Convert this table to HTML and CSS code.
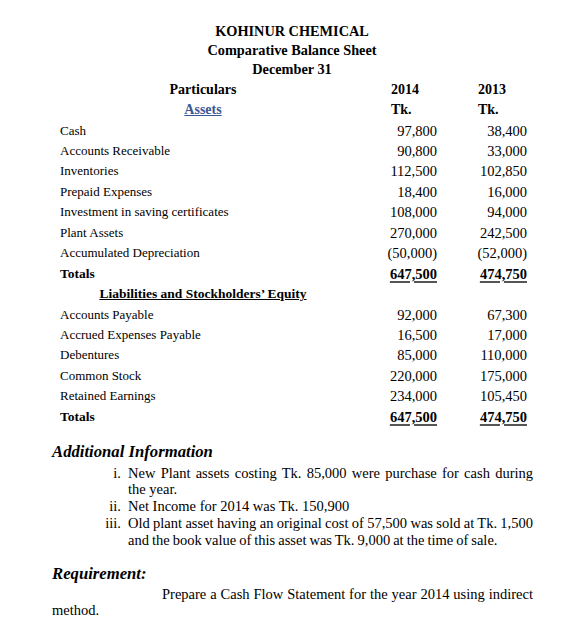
FILE: index.html
```html
<!DOCTYPE html>
<html lang="en">
<head>
    <meta charset="UTF-8">
    <meta name="viewport" content="width=device-width, initial-scale=1.0">
    <title>Kohinur Chemical - Comparative Balance Sheet</title>
    <link rel="stylesheet" href="styles.css">
</head>
<body>
    <div class="page">
        <header class="title">
            <div>KOHINUR CHEMICAL</div>
            <div>Comparative Balance Sheet</div>
            <div>December 31</div>
        </header>

        <div class="sheet">
            <div class="row head">
                <div class="label center">Particulars</div>
                <div class="y14">2014</div>
                <div class="y13">2013</div>
            </div>
            <div class="row head">
                <div class="label center"><span class="section">Assets</span></div>
                <div class="y14">Tk.</div>
                <div class="y13">Tk.</div>
            </div>

            <div class="row"><div class="label">Cash</div><div class="num">97,800</div><div class="num">38,400</div></div>
            <div class="row"><div class="label">Accounts Receivable</div><div class="num">90,800</div><div class="num">33,000</div></div>
            <div class="row"><div class="label">Inventories</div><div class="num">112,500</div><div class="num">102,850</div></div>
            <div class="row"><div class="label">Prepaid Expenses</div><div class="num">18,400</div><div class="num">16,000</div></div>
            <div class="row"><div class="label">Investment in saving certificates</div><div class="num">108,000</div><div class="num">94,000</div></div>
            <div class="row"><div class="label">Plant Assets</div><div class="num">270,000</div><div class="num">242,500</div></div>
            <div class="row"><div class="label">Accumulated Depreciation</div><div class="num">(50,000)</div><div class="num">(52,000)</div></div>
            <div class="row total"><div class="label">Totals</div><div class="num"><u>647,500</u></div><div class="num"><u>474,750</u></div></div>

            <div class="row head">
                <div class="label center"><span class="sub">Liabilities and Stockholders’ Equity</span></div>
                <div></div>
                <div></div>
            </div>
            <div class="row"><div class="label">Accounts Payable</div><div class="num">92,000</div><div class="num">67,300</div></div>
            <div class="row"><div class="label">Accrued Expenses Payable</div><div class="num">16,500</div><div class="num">17,000</div></div>
            <div class="row"><div class="label">Debentures</div><div class="num">85,000</div><div class="num">110,000</div></div>
            <div class="row"><div class="label">Common Stock</div><div class="num">220,000</div><div class="num">175,000</div></div>
            <div class="row"><div class="label">Retained Earnings</div><div class="num">234,000</div><div class="num">105,450</div></div>
            <div class="row total"><div class="label">Totals</div><div class="num"><u>647,500</u></div><div class="num"><u>474,750</u></div></div>
        </div>

        <h3 class="heading info">Additional Information</h3>
        <ul class="notes">
            <li><span class="mark">i.</span><span class="text">New Plant assets costing Tk. 85,000 were purchase for cash during the year.</span></li>
            <li><span class="mark">ii.</span><span class="text">Net Income for 2014 was Tk. 150,900</span></li>
            <li class="tight"><span class="mark">iii.</span><span class="text">Old plant asset having an original cost of 57,500 was sold at Tk. 1,500 and the book value of this asset was Tk. 9,000 at the time of sale.</span></li>
        </ul>

        <h3 class="heading req">Requirement:</h3>
        <p class="task">Prepare a Cash Flow Statement for the year 2014 using indirect method.</p>
    </div>
</body>
</html>
```

FILE: styles.css
```css
body {
    margin: 0;
    padding: 0;
    background-color: #ffffff;
    color: #000000;
    font-family: 'Liberation Serif', 'Times New Roman', serif;
    font-size: 13px;
}

.page {
    width: 481px;
    padding: 21.5px 0 0 52px;
}

.title {
    font-size: 14.3px;
    font-weight: bold;
    line-height: 19.4px;
    text-align: center;
    width: 480px;
}

.sheet {
    margin-left: 8px;
    width: 467px;
}

.row {
    display: grid;
    grid-template-columns: 286px 91px 90px;
    height: 20.44px;
    align-items: center;
    line-height: 20.44px;
}

.head {
    font-weight: bold;
    font-size: 14px;
}

.label.center {
    text-align: center;
}

.y14 {
    padding-left: 45px;
}

.y13 {
    padding-left: 41px;
}

.section {
    color: #3b5896;
    text-decoration: underline;
}

.sub {
    font-size: 13.5px;
    text-decoration: underline;
}

.num {
    font-size: 14.5px;
    text-align: right;
}

.total {
    font-weight: bold;
}

.total .label {
    font-size: 13.5px;
}

.total u {
    text-decoration-color: #555;
    text-decoration-thickness: 1.5px;
    text-underline-offset: 2px;
}

.heading {
    margin: 0;
    font-size: 16.7px;
    font-style: italic;
    font-weight: bold;
    line-height: 20px;
}

.info {
    margin-top: 15px;
}

.notes {
    list-style: none;
    margin: 2.5px 0 0;
    padding: 0;
    font-size: 14.5px;
}

.notes li {
    display: grid;
    grid-template-columns: 69px 1fr;
    column-gap: 7px;
    line-height: 16.75px;
}

.notes li.tight .text {
    word-spacing: -0.6px;
}

.mark {
    text-align: right;
}

.text {
    text-align: justify;
}

.req {
    margin-top: 15.5px;
}

.task {
    margin: 2px 0 0;
    font-size: 14.5px;
    line-height: 16px;
    text-indent: 110px;
    text-align: justify;
}
```
